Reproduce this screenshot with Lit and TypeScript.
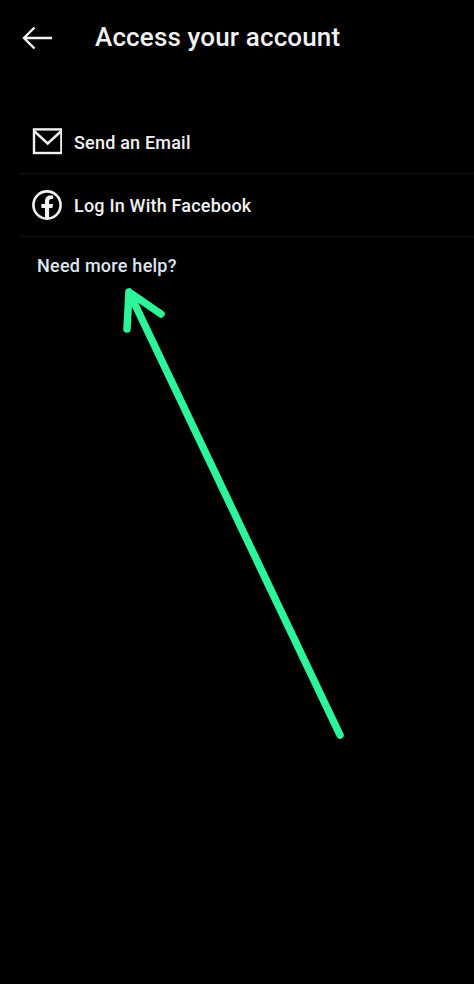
import { LitElement, html, css } from "lit";
import { customElement } from "lit/decorators.js";

@customElement("app-root")
export class AppRoot extends LitElement {
  static styles = css`
    :host {
      display: block;
      position: relative;
      width: 474px;
      height: 984px;
      background: #000;
      color: #f2f2f2;
      font-family: Roboto, "Liberation Sans", sans-serif;
      overflow: hidden;
    }
    .header {
      display: flex;
      align-items: center;
      height: 74px;
      padding-left: 22px;
    }
    .back {
      width: 30px;
      height: 24px;
      display: block;
    }
    .title {
      margin: 0 0 0 43px;
      font-size: 26px;
      font-weight: 500;
      letter-spacing: 0.15px;
    }
    .list {
      margin: 37px 0 0 20px;
    }
    .row {
      display: flex;
      align-items: center;
      gap: 12px;
      height: 62px;
      padding-left: 12px;
      border-bottom: 1px solid #111;
      font-size: 18px;
      font-weight: 500;
      letter-spacing: 0.2px;
    }
    .icon {
      width: 30px;
      height: 30px;
      display: block;
    }
    .help {
      margin: 18px 0 0 37px;
      font-size: 18px;
      font-weight: 500;
      letter-spacing: 0.25px;
      color: #dfe6f2;
    }
    .arrow {
      position: absolute;
      left: 0;
      top: 0;
      width: 474px;
      height: 984px;
      pointer-events: none;
    }
  `;

  render() {
    return html`
      <div class="header">
        <svg class="back" viewBox="0 0 30 24" fill="none" stroke="#f2f2f2" stroke-width="2.4">
          <path d="M30 13H2M12.5 2.5L2 13l10.5 10.5" />
        </svg>
        <h1 class="title">Access your account</h1>
      </div>
      <div class="list">
        <div class="row">
          <svg class="icon" viewBox="0 0 30 30" fill="none" stroke="#f2f2f2" stroke-width="2.4">
            <rect x="2" y="2.4" width="27.4" height="23.6" />
            <path d="M2.6 4.5L15.7 16.5L28.8 4.5" />
          </svg>
          <span>Send an Email</span>
        </div>
        <div class="row">
          <svg class="icon" viewBox="0 0 30 30">
            <circle cx="15" cy="15" r="13.6" fill="none" stroke="#f2f2f2" stroke-width="2.6" />
            <path
              fill="#f2f2f2"
              d="M13 28.5V18h-3.6v-4H13v-3c0-3.6 2.2-5.6 5.4-5.6 1.4 0 2.7.2 2.7.2v3.5h-1.7c-1.7 0-2.3 1.1-2.3 2.2V14h3.9l-.6 4h-3.3v10.5z"
            />
          </svg>
          <span>Log In With Facebook</span>
        </div>
      </div>
      <div class="help">Need more help?</div>
      <svg class="arrow" viewBox="0 0 474 984" fill="none" stroke="#2df59a" stroke-width="7.5" stroke-linecap="round" stroke-linejoin="round">
        <path d="M340 735L129 292M127 329L129 292L161 314" />
      </svg>
    `;
  }
}
